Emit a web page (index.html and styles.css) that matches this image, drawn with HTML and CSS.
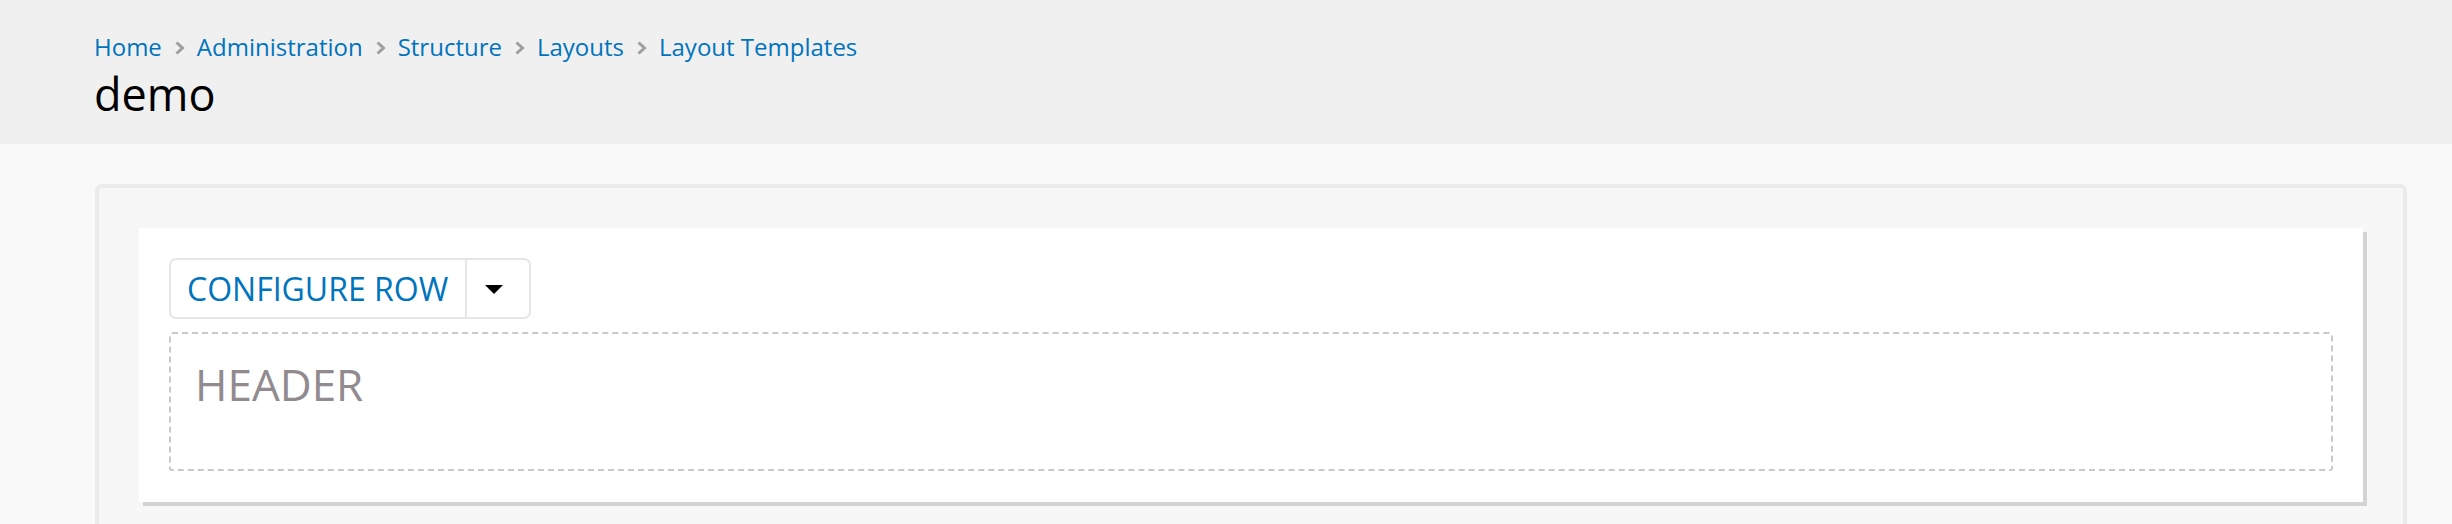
FILE: index.html
```html
<!DOCTYPE html>
<html lang="en">
<head>
<meta charset="utf-8">
<title>demo | Layout Templates</title>
<link rel="stylesheet" href="styles.css">
</head>
<body>
<header class="page-header">
  <nav class="breadcrumb" aria-label="Breadcrumb">
    <ol class="crumbs">
      <li class="crumb"><a href="#">Home</a></li>
      <li class="sep" aria-hidden="true"><svg viewBox="0 0 10 14" width="10" height="14"><path d="M1.5 1.5 L7.5 7 L1.5 12.5" fill="none" stroke="#9e9e9e" stroke-width="3"/></svg></li>
      <li class="crumb"><a href="#">Administration</a></li>
      <li class="sep" aria-hidden="true"><svg viewBox="0 0 10 14" width="10" height="14"><path d="M1.5 1.5 L7.5 7 L1.5 12.5" fill="none" stroke="#9e9e9e" stroke-width="3"/></svg></li>
      <li class="crumb"><a href="#">Structure</a></li>
      <li class="sep" aria-hidden="true"><svg viewBox="0 0 10 14" width="10" height="14"><path d="M1.5 1.5 L7.5 7 L1.5 12.5" fill="none" stroke="#9e9e9e" stroke-width="3"/></svg></li>
      <li class="crumb"><a href="#">Layouts</a></li>
      <li class="sep" aria-hidden="true"><svg viewBox="0 0 10 14" width="10" height="14"><path d="M1.5 1.5 L7.5 7 L1.5 12.5" fill="none" stroke="#9e9e9e" stroke-width="3"/></svg></li>
      <li class="crumb"><a href="#">Layout Templates</a></li>
    </ol>
  </nav>
  <h1 class="title">demo</h1>
</header>
<main class="content">
  <section class="panel">
    <div class="row-card">
      <div class="btn-group">
        <button class="btn btn-main" type="button">CONFIGURE ROW</button>
        <button class="btn btn-caret" type="button" aria-label="More actions"><span class="caret"></span></button>
      </div>
      <div class="region">
        <span class="region-label">HEADER</span>
      </div>
    </div>
  </section>
</main>
</body>
</html>
```

FILE: styles.css
```css
html, body {
  margin: 0;
  padding: 0;
}
body {
  background: #f9f9f9;
  font-family: "Open Sans", "Noto Sans", "DejaVu Sans", sans-serif;
  color: #000;
  overflow: hidden;
}
a {
  color: #0074bd;
  text-decoration: none;
}

.page-header {
  background: #f0f0f0;
  height: 144px;
  box-sizing: border-box;
  padding: 31px 45px 0 94px;
}
.crumbs {
  list-style: none;
  margin: 0;
  padding: 0;
  display: flex;
  align-items: center;
  font-size: 24px;
  line-height: 32px;
}
.sep {
  display: flex;
  align-items: center;
  margin: 2px 12px 0 13px;
}
.sep svg {
  display: block;
}
.title {
  margin: 4px 0 0;
  font-size: 45px;
  line-height: 54px;
  font-weight: 400;
}

.content {
  padding: 40px 45px 0 95px;
}
.panel {
  background: #f7f7f7;
  border: 4px solid #ebebeb;
  border-radius: 7px;
  padding: 40px;
  min-height: 400px;
}
.row-card {
  background: #fff;
  box-shadow: 4px 4px 0 #d3d3d3;
  padding: 30px 30px 31px;
}

.btn-group {
  display: inline-flex;
  height: 61px;
  box-sizing: border-box;
  border: 2px solid #e6e6e6;
  border-radius: 7px;
  background: #fff;
}
.btn {
  font-family: inherit;
  background: transparent;
  border: 0;
  margin: 0;
  padding: 0;
  cursor: pointer;
}
.btn-main {
  color: #0074bd;
  font-size: 32px;
  line-height: 57px;
  padding: 0 17px 0 16px;
  border-right: 2px solid #e6e6e6;
}
.btn-caret {
  width: 62px;
  display: flex;
  align-items: center;
  justify-content: center;
  padding-right: 8px;
  padding-top: 1px;
}
.caret {
  display: block;
  width: 0;
  height: 0;
  border-top: 9px solid #000;
  border-left: 9px solid transparent;
  border-right: 9px solid transparent;
}

.region {
  margin-top: 13px;
  height: 139px;
  box-sizing: border-box;
  border: 2px dashed #c9c9c9;
  border-radius: 3px;
  padding: 23px 22px 0 24px;
}
.region-label {
  display: block;
  font-size: 44px;
  line-height: 54px;
  color: #918a8e;
}
```
